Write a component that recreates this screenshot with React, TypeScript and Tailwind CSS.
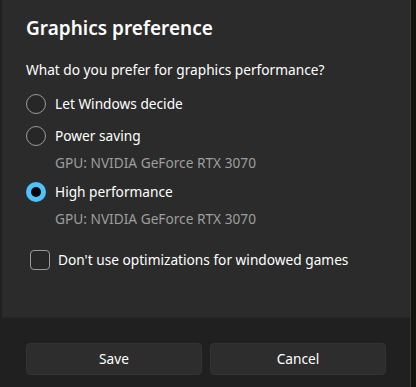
import React, { useState } from 'react'

const font = { fontFamily: '"Noto Sans", "Open Sans", sans-serif' }

function Radio(props: { checked: boolean; label: string; sub?: string; onSelect: () => void }) {
  const { checked, label, sub, onSelect } = props
  return (
    <div>
      <button type="button" onClick={onSelect} className="flex h-[32px] items-center gap-[9px] text-left">
        {checked ? (
          <span className="flex h-[20px] w-[20px] items-center justify-center rounded-full bg-[#4cc2ff]">
            <span className="h-[10px] w-[10px] rounded-full bg-black" />
          </span>
        ) : (
          <span className="h-[20px] w-[20px] rounded-full border border-[#9b9b9b] bg-[#272727]" />
        )}
        <span className="text-[13.7px] text-white">{label}</span>
      </button>
      {sub && <div className="pl-[29px] text-[13.7px] leading-[22px] text-[#9e9e9e]">{sub}</div>}
    </div>
  )
}

export default function App() {
  const [pref, setPref] = useState<'auto' | 'power' | 'high'>('high')
  const [noOpt, setNoOpt] = useState(false)

  return (
    <div className="flex h-[387px] w-[416px] overflow-hidden bg-[#1c1c1c]" style={font}>
      <div className="w-[2px] bg-[#202020]" />
      <div className="flex flex-1 flex-col border-r border-[#3b3a38] bg-[#2b2b2b]">
        <div className="h-[317px] px-[24px] pt-[14px]">
          <div className="text-[19px] font-semibold leading-[28px] text-white">Graphics preference</div>
          <div className="mt-[18px] text-[13.7px] leading-[20px] text-white">What do you prefer for graphics performance?</div>
          <div className="mt-[8px] flex flex-col">
            <Radio checked={pref === 'auto'} label="Let Windows decide" onSelect={() => setPref('auto')} />
            <Radio checked={pref === 'power'} label="Power saving" sub="GPU: NVIDIA GeForce RTX 3070" onSelect={() => setPref('power')} />
            <div className="h-[2px]" />
            <Radio checked={pref === 'high'} label="High performance" sub="GPU: NVIDIA GeForce RTX 3070" onSelect={() => setPref('high')} />
          </div>
          <button type="button" onClick={() => setNoOpt(!noOpt)} className="mt-[14px] ml-[4px] flex h-[32px] items-center gap-[8px]">
            <span className="h-[20px] w-[20px] rounded-[4px] border border-[#9b9b9b] bg-[#272727]" />
            <span className="text-[13.7px] text-white">Don't use optimizations for windowed games</span>
          </button>
        </div>
        <div className="flex flex-1 gap-[8px] border-t border-[#262626] bg-[#202020] px-[24px] pt-[25px]">
          <button type="button" className="h-[32px] flex-1 rounded-[4px] border border-[#333333] bg-[#2d2d2d] text-[13.7px] text-white">Save</button>
          <button type="button" className="h-[32px] flex-1 rounded-[4px] border border-[#333333] bg-[#2d2d2d] text-[13.7px] text-white">Cancel</button>
        </div>
      </div>
      <div className="w-[5px] bg-[#14120f]" />
    </div>
  )
}
